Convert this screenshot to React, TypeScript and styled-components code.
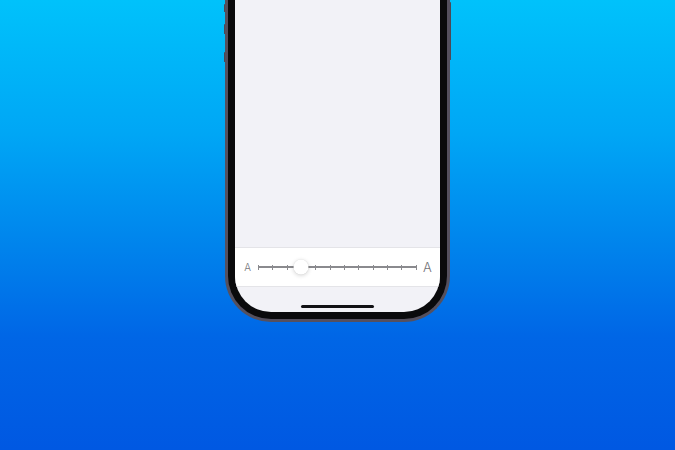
import styled, { createGlobalStyle } from "styled-components";

const GlobalStyle = createGlobalStyle`
  html, body {
    margin: 0;
    padding: 0;
    height: 100%;
  }
  body {
    font-family: Inter, "Liberation Sans", sans-serif;
  }
`;

const STEPS = 12;
const VALUE = 3;

const Page = styled.main`
  height: 100vh;
  display: flex;
  justify-content: center;
  align-items: flex-start;
  background: linear-gradient(180deg, #00c2fb 0%, #00a6f5 30%, #0083ec 55%, #0066e6 75%, #0058e2 100%);
  overflow: hidden;
`;

const Phone = styled.div`
  position: relative;
  box-sizing: border-box;
  width: 225px;
  height: 322px;
  padding: 0 7px 7px;
  background: #0a0a0c;
  border: 3px solid #55505e;
  border-top: none;
  border-radius: 0 0 46px 46px;
`;

const SideButton = styled.span<{ $side: "left" | "right"; $top: number; $len: number }>`
  position: absolute;
  ${(p) => (p.$side === "left" ? "left: -4px;" : "right: -4px;")}
  top: ${(p) => p.$top}px;
  width: 1px;
  height: ${(p) => p.$len}px;
  background: #4c4856;
  border-radius: 1px;
`;

const Screen = styled.div`
  height: 100%;
  display: flex;
  flex-direction: column;
  background: #f2f2f7;
  border-radius: 0 0 36px 36px;
  overflow: hidden;
`;

const Content = styled.div`
  flex: 1;
`;

const SliderPanel = styled.div`
  height: 38px;
  display: flex;
  align-items: center;
  gap: 6px;
  padding: 0 8px 0 9px;
  background: #ffffff;
  border-top: 1px solid #e4e4e8;
  border-bottom: 1px solid #e4e4e8;
`;

const Letter = styled.span<{ $size: number }>`
  font-size: ${(p) => p.$size}px;
  font-weight: 300;
  color: #737378;
  line-height: 1;
  width: ${(p) => p.$size * 0.7}px;
  text-align: center;
`;

const Track = styled.div`
  position: relative;
  flex: 1;
  height: 2px;
  margin-left: 1px;
  background: #8a8a8e;
  display: flex;
  justify-content: space-between;
  align-items: center;
`;

const Tick = styled.span`
  width: 1px;
  height: 5px;
  background: #8a8a8e;
`;

const Thumb = styled.span`
  position: absolute;
  top: 50%;
  width: 15px;
  height: 15px;
  border-radius: 50%;
  background: #ffffff;
  box-shadow: 0 1px 4px rgba(0, 0, 0, 0.18), 0 0 1px rgba(0, 0, 0, 0.12);
  transform: translate(-50%, -50%);
`;

const Footer = styled.div`
  height: 25px;
  display: flex;
  justify-content: center;
  align-items: flex-end;
  padding-bottom: 4px;
  box-sizing: border-box;
`;

const HomeBar = styled.span`
  width: 73px;
  height: 3px;
  border-radius: 2px;
  background: #111114;
`;

export default function App() {
  const ticks = Array.from({ length: STEPS }, (_, i) => i);
  return (
    <>
      <GlobalStyle />
      <Page>
        <Phone>
          <SideButton $side="left" $top={4} $len={8} />
          <SideButton $side="left" $top={24} $len={10} />
          <SideButton $side="left" $top={52} $len={10} />
          <SideButton $side="right" $top={2} $len={58} />
          <Screen>
            <Content />
            <SliderPanel>
              <Letter $size={10}>A</Letter>
              <Track>
                {ticks.map((i) => (
                  <Tick key={i} />
                ))}
                <Thumb style={{ left: `${(VALUE / (STEPS - 1)) * 100}%` }} />
              </Track>
              <Letter $size={13}>A</Letter>
            </SliderPanel>
            <Footer>
              <HomeBar />
            </Footer>
          </Screen>
        </Phone>
      </Page>
    </>
  );
}
